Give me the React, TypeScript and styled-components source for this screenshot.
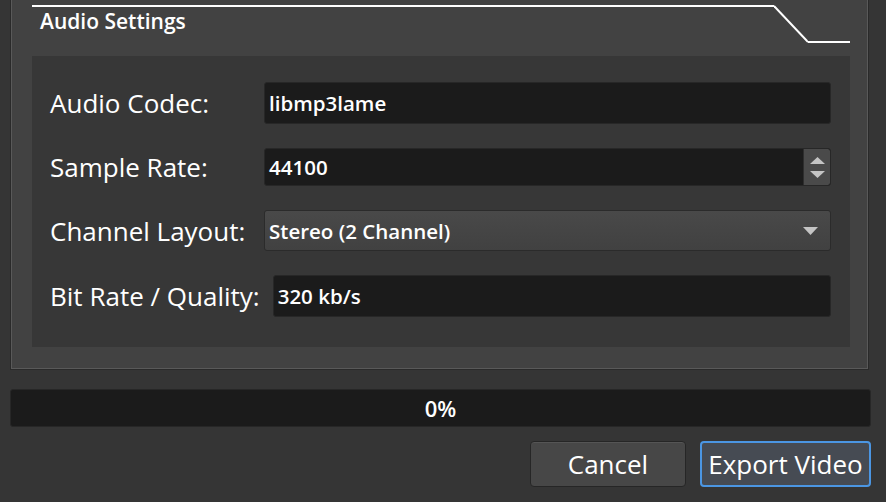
import React from "react";
import styled, { createGlobalStyle } from "styled-components";

const GlobalStyle = createGlobalStyle`
  html, body { margin: 0; padding: 0; background: #353535; }
  body { font-family: "Open Sans", "DejaVu Sans", sans-serif; color: #ffffff; }
  * { box-sizing: border-box; }
`;

const Page = styled.div`
  width: 886px;
  height: 502px;
  padding: 0 15px 15px 10px;
  display: flex;
  flex-direction: column;
`;

const GroupBox = styled.section`
  margin-right: 2px;
  height: 370px;
  background: #424242;
  border: 1px solid #2a2a2a;
  border-top: none;
  box-shadow: inset 1px 0 #595959, inset -1px 0 #595959, inset 0 -1px #595959;
  padding: 0 18px 22px 21px;
  display: flex;
  flex-direction: column;
`;

const Header = styled.div`
  display: flex;
  height: 56px;
`;

const TitleTab = styled.div`
  flex: 1;
  align-self: flex-start;
  margin-top: 5px;
  border-top: 2px solid #ffffff;
  padding: 4px 0 0 8px;
  font-size: 21px;
  font-weight: 600;
  line-height: 21px;
`;

const Slant = styled.svg`
  flex: 0 0 34px;
  width: 34px;
  height: 56px;
  display: block;
`;

const Tail = styled.div`
  flex: 0 0 42px;
  align-self: flex-start;
  margin-top: 41px;
  border-top: 2px solid #ffffff;
`;

const Panel = styled.div`
  background: #373737;
  height: 291px;
  padding: 26px 19px 30px 18px;
  display: flex;
  flex-direction: column;
  gap: 24px;
`;

const Row = styled.div<{ $h: number }>`
  display: flex;
  align-items: center;
  gap: 13px;
  height: ${(p) => p.$h}px;
`;

const Label = styled.div`
  min-width: 201px;
  font-size: 26px;
  line-height: 1;
  white-space: nowrap;
`;

const Field = styled.div`
  flex: 1;
  height: 100%;
  display: flex;
  align-items: center;
  background: #1b1b1b;
  border: 1px solid #272727;
  border-radius: 3px;
  padding-left: 4px;
  font-size: 20.5px;
  font-weight: 600;
  overflow: hidden;
`;

const FieldText = styled.span`
  flex: 1;
`;

const SpinButtons = styled.div`
  width: 27px;
  height: 100%;
  background: #4a4a4a;
  border-left: 1px solid #2e2e2e;
  border-radius: 0 2px 2px 0;
  display: flex;
  flex-direction: column;
  align-items: center;
  justify-content: center;
  gap: 7px;
`;

const Combo = styled(Field)`
  background: linear-gradient(#494949, #414141);
  border-color: #2b2b2b;
  padding-right: 12px;
`;

const Progress = styled.div`
  margin-top: 19px;
  height: 38px;
  background: #1b1b1b;
  border: 1px solid #272727;
  border-radius: 3px;
  display: flex;
  align-items: center;
  justify-content: center;
  font-size: 22px;
  font-weight: 600;
`;

const ButtonRow = styled.div`
  margin-top: 14px;
  display: flex;
  justify-content: flex-end;
  gap: 14px;
`;

const Button = styled.button<{ $w: number; $primary?: boolean }>`
  width: ${(p) => p.$w}px;
  height: 46px;
  font-family: "Open Sans", "DejaVu Sans", sans-serif;
  font-size: 26px;
  color: #ffffff;
  padding: 0;
  background: ${(p) => (p.$primary ? "#464b53" : "#474747")};
  border: ${(p) => (p.$primary ? "2px solid #4b96e3" : "1px solid #262626")};
  border-radius: 4px;
  box-shadow: ${(p) => (p.$primary ? "none" : "inset 0 1px #555555")};
`;

const Tri = ({ dir, w = 15, h = 7 }: { dir: "up" | "down"; w?: number; h?: number }) => (
  <svg width={w} height={h} viewBox={`0 0 ${w} ${h}`} style={{ display: "block" }}>
    <polygon
      points={dir === "up" ? `0,${h} ${w / 2},0 ${w},${h}` : `0,0 ${w},0 ${w / 2},${h}`}
      fill="#c4c4c4"
    />
  </svg>
);

export default function App() {
  return (
    <>
      <GlobalStyle />
      <Page>
        <GroupBox>
          <Header>
            <TitleTab>Audio Settings</TitleTab>
            <Slant viewBox="0 0 34 56">
              <line x1="0" y1="6" x2="34" y2="42" stroke="#ffffff" strokeWidth="2" />
            </Slant>
            <Tail />
          </Header>
          <Panel>
            <Row $h={42}>
              <Label>Audio Codec:</Label>
              <Field>
                <FieldText>libmp3lame</FieldText>
              </Field>
            </Row>
            <Row $h={38}>
              <Label>Sample Rate:</Label>
              <Field>
                <FieldText>44100</FieldText>
                <SpinButtons>
                  <Tri dir="up" />
                  <Tri dir="down" />
                </SpinButtons>
              </Field>
            </Row>
            <Row $h={41}>
              <Label>Channel Layout:</Label>
              <Combo>
                <FieldText>Stereo (2 Channel)</FieldText>
                <Tri dir="down" w={15} h={8} />
              </Combo>
            </Row>
            <Row $h={42}>
              <Label>Bit Rate / Quality:</Label>
              <Field>
                <FieldText>320 kb/s</FieldText>
              </Field>
            </Row>
          </Panel>
        </GroupBox>
        <Progress>0%</Progress>
        <ButtonRow>
          <Button $w={156}>Cancel</Button>
          <Button $w={171} $primary>
            Export Video
          </Button>
        </ButtonRow>
      </Page>
    </>
  );
}
